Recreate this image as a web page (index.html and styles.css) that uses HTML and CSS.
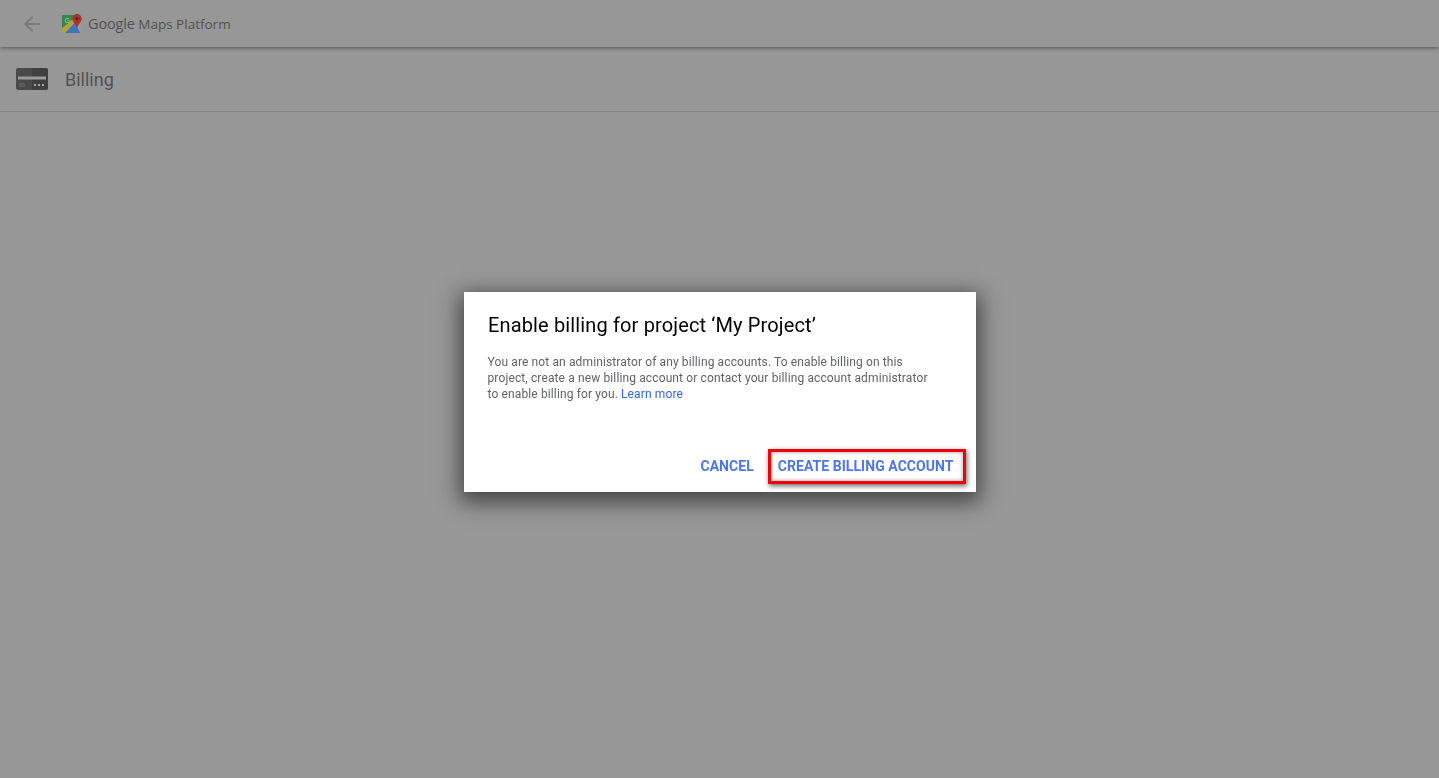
FILE: index.html
```html
<!DOCTYPE html>
<html lang="en">
<head>
    <meta charset="UTF-8">
    <title>Billing</title>
    <link rel="stylesheet" href="styles.css">
</head>
<body>

    <header class="topbar">
        <svg class="back-icon" width="20" height="20" viewBox="0 0 20 20">
            <path d="M18 9H5.8l5.6-5.6L10 2l-8 8 8 8 1.400-1.400L5.800 11H18z" fill="#7b7b7b"/>
        </svg>
        <svg class="maps-logo" width="20" height="19" viewBox="0 0 20 19">
            <polygon points="0,1 13,1 13,8 0,17" fill="#37874a"/>
            <polygon points="0,19 0,14.500 11,5 13.500,7.500 3,19" fill="#b5a338"/>
            <polygon points="3,19 13,8.500 18.500,19" fill="#4273bb"/>
            <polygon points="13,8.500 18.500,8.500 18.500,19" fill="#9c9c9c"/>
            <path d="M15 0a4.700 4.700 0 0 0-4.700 4.700c0 3.300 3.600 5.500 4.700 9.300 1.100-3.800 4.700-6 4.700-9.300A4.700 4.700 0 0 0 15 0z" fill="#a8342a"/>
            <circle cx="15" cy="4.700" r="1.600" fill="#6d2019"/>
            <text x="2.500" y="9" class="maps-g">G</text>
        </svg>
        <span class="brand"><span class="brand-google">Google</span> Maps Platform</span>
    </header>

    <div class="page-title">
        <svg width="32" height="22" viewBox="0 0 32 22">
            <rect width="32" height="22" rx="2" fill="#4a4a4a"/>
            <rect x="16" width="16" height="22" rx="2" fill="#404040"/>
            <rect x="2" y="8.500" width="28" height="3" fill="#9a9a9a"/>
            <rect x="3" y="15" width="6" height="4" fill="#5a5a5a"/>
            <rect x="18" y="16" width="2" height="2" fill="#a5a5a5"/>
            <rect x="22" y="16" width="2" height="2" fill="#a5a5a5"/>
            <rect x="26" y="16" width="2" height="2" fill="#a5a5a5"/>
        </svg>
        <h1>Billing</h1>
    </div>

    <div class="overlay">
        <div class="dialog">
            <h2>Enable billing for project ‘My Project’</h2>
            <p>You are not an administrator of any billing accounts. To enable billing on this project, create a new billing account or contact your billing account administrator to enable billing for you. <a href="#">Learn more</a></p>
            <div class="actions">
                <button>CANCEL</button>
                <button class="highlighted">CREATE BILLING ACCOUNT</button>
            </div>
        </div>
    </div>

</body>
</html>
```

FILE: styles.css
```css
* {
    box-sizing: border-box;
}

body {
    margin: 0;
    height: 778px;
    overflow: hidden;
    font-family: Roboto, "Liberation Sans", sans-serif;
    background-color: #979797;
}

.topbar {
    display: flex;
    align-items: center;
    height: 47px;
    padding-left: 22px;
    background-color: #979797;
    box-shadow: 0 1px 4px rgba(0, 0, 0, 0.45);
}

.back-icon {
    margin-right: 20px;
}

.brand {
    margin-left: 6px;
    font-family: "Open Sans", sans-serif;
    font-size: 13.5px;
    color: #525252;
}

.brand-google {
    font-size: 14.5px;
    letter-spacing: -0.15px;
}

.maps-g {
    font-family: "Liberation Sans", sans-serif;
    font-size: 7px;
    fill: #b5c9b8;
}

.page-title {
    display: flex;
    align-items: center;
    height: 65px;
    padding-left: 16px;
    border-bottom: 1px solid #858585;
}

.page-title h1 {
    margin: 0 0 0 17px;
    font-size: 18px;
    font-weight: 400;
    color: #4f5357;
}

.overlay {
    position: fixed;
    top: 6px;
    left: 0;
    right: 0;
    bottom: 0;
    display: flex;
    align-items: center;
    justify-content: center;
}

.dialog {
    display: flex;
    flex-direction: column;
    width: 512px;
    height: 200px;
    padding: 21px 10px 8px 24px;
    background: white;
    box-shadow: 0 6px 20px 4px rgba(0, 0, 0, 0.55);
}

.dialog h2 {
    margin: 0 0 0 0.5px;
    font-size: 20px;
    line-height: 24px;
    font-weight: 400;
    letter-spacing: 0.14px;
    color: #000;
}

.dialog p {
    margin: 17px 0 0;
    width: 445px;
    font-size: 12px;
    line-height: 16px;
    letter-spacing: 0.125px;
    color: #5f6368;
}

.dialog a {
    color: #3367d6;
    text-decoration: none;
}

.actions {
    display: flex;
    justify-content: flex-end;
    align-items: center;
    gap: 14px;
    margin-top: auto;
}

.actions button {
    padding: 0 0 2px;
    border: none;
    background: none;
    font-family: inherit;
    font-size: 14px;
    font-weight: 700;
    letter-spacing: 0.05px;
    color: #4f76e8;
}

.actions .highlighted {
    height: 35px;
    padding: 0 9px 2px 7px;
    border: 3px solid #f2000a;
    box-shadow: 1px 2px 5px rgba(0, 0, 0, 0.6), inset 0 0 4px rgba(0, 0, 0, 0.4);
}
```
